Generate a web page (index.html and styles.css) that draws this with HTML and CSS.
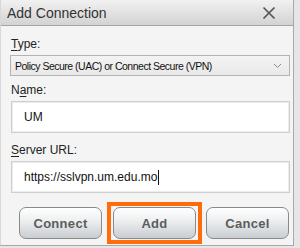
FILE: index.html
```html
<!DOCTYPE html>
<html>
<head>
<meta charset="utf-8">
<link rel="stylesheet" href="styles.css">
</head>
<body>
<div class="window">
  <div class="titlebar">
    <span class="title">Add Connection</span>
    <svg class="close" width="14" height="14" viewBox="0 0 14 14"><path d="M1.5 1.5 L12.5 12.5 M12.5 1.5 L1.5 12.5" stroke="#555" stroke-width="1.7" fill="none"/></svg>
  </div>
  <div class="content">
    <div class="label lbl-type"><u>T</u>ype:</div>
    <div class="select">
      <span class="select-text">Policy Secure (UAC) or Connect Secure (VPN)</span>
      <svg class="chev" width="9" height="6" viewBox="0 0 9 6"><path d="M1 1 L4.5 4.5 L8 1" stroke="#888" stroke-width="1" fill="none"/></svg>
    </div>
    <div class="label lbl-name">N<u>a</u>me:</div>
    <div class="input">UM</div>
    <div class="label lbl-url"><u>S</u>erver URL:</div>
    <div class="input">https://sslvpn.um.edu.mo<span class="caret"></span></div>
    <div class="buttons">
      <div class="btn">Connect</div>
      <div class="btn btn-add">Add</div>
      <div class="btn">Cancel</div>
    </div>
  </div>
</div>
</body>
</html>
```
FILE: styles.css
```css
html, body {
  margin: 0;
  padding: 0;
}
body {
  width: 300px;
  height: 248px;
  background: #e6e6e6;
  overflow: hidden;
  font-family: "Liberation Sans", Arial, sans-serif;
}
.window {
  width: 292px;
  height: 245px;
  background: #f4f4f4;
  border-right: 1px solid #a9a9a9;
  border-bottom: 1px solid #a9a9a9;
  box-sizing: content-box;
  border-left: 2px solid #d8d8d8;
  margin-left: -1px;
}
.titlebar {
  height: 26px;
  box-sizing: border-box;
  background: linear-gradient(#f1f1f1, #d3d3d3);
  border-bottom: 1px solid #a4a4a4;
  display: flex;
  align-items: center;
  justify-content: space-between;
  padding: 0 17px 0 6px;
}
.title {
  font-size: 14px;
  color: #333;
}
.close {
  display: block;
}
.content {
  padding: 10px 3px 0 9px;
  display: flex;
  flex-direction: column;
}
.label {
  font-size: 12px;
  color: #222;
  line-height: 16px;
  padding-left: 1px;
}
.label u {
  text-underline-offset: 2px;
}
.select {
  margin-top: 3px;
  height: 21px;
  box-sizing: border-box;
  border: 1px solid #b3b3b3;
  background: linear-gradient(#f3f3f3, #e9e9e9);
  display: flex;
  align-items: center;
  justify-content: space-between;
  padding: 0 7px 0 4px;
}
.select-text {
  font-size: 10.5px;
  color: #111;
  letter-spacing: -0.5px;
}
.chev {
  display: block;
}
.lbl-name {
  margin-top: 6px;
}
.input {
  margin-top: 3px;
  margin-left: 1px;
  height: 32px;
  box-sizing: border-box;
  border: 1px solid #cfcfcf;
  box-shadow: inset 0 0 0 1px #ececec;
  background: #fff;
  font-size: 12px;
  color: #111;
  display: flex;
  align-items: center;
  padding-left: 12px;
}
.lbl-url {
  margin-top: 9px;
}
.caret {
  display: inline-block;
  width: 0;
  height: 15px;
  border-left: 1px solid #111;
  margin-left: 1px;
}
.buttons {
  margin-top: 14px;
  display: flex;
  gap: 10px;
  padding-left: 9px;
}
.btn {
  width: 83px;
  height: 32px;
  box-sizing: border-box;
  border: 1px solid #8a8a8a;
  border-radius: 7px;
  background: linear-gradient(#ffffff 0%, #eef0f1 40%, #c9cdd1 100%);
  box-shadow: inset 0 1px 0 #fff;
  display: flex;
  align-items: center;
  justify-content: center;
  font-size: 13px;
  font-weight: bold;
  color: #5c5c5c;
  letter-spacing: 0.3px;
}
.btn-add {
  margin-left: 1px;
  position: relative;
}
.btn-add::after {
  content: "";
  position: absolute;
  top: -6px;
  bottom: -6px;
  left: -7px;
  right: -7px;
  border: 4px solid #ff6c0a;
}
```
